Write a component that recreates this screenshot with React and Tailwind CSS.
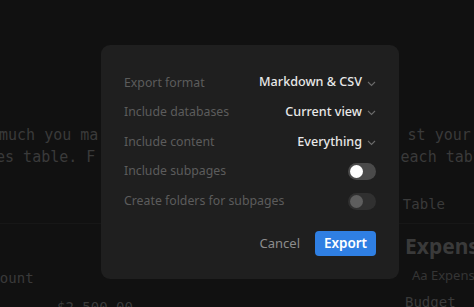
import React from "react";

const sans = { fontFamily: '"Noto Sans", "Open Sans", sans-serif' };

function Chevron() {
  return (
    <svg width="9" height="6" viewBox="0 0 9 6" className="ml-[5px] mt-[2px]">
      <polyline points="1,1 4.5,4.5 8,1" fill="none" stroke="#6b6b6b" strokeWidth="1.1" />
    </svg>
  );
}

function Row({ label, children }) {
  return (
    <div className="flex items-center justify-between h-[29.6px]">
      <span className="text-[12.3px] text-[#5c5c5c]">{label}</span>
      {children}
    </div>
  );
}

function Select({ value }) {
  return (
    <div className="flex items-center">
      <span className="text-[12.6px] font-medium text-[#e8e8e8]">{value}</span>
      <Chevron />
    </div>
  );
}

function Toggle({ disabled }) {
  return (
    <div
      className={`w-[28px] h-[17px] rounded-full flex items-center px-[2px] ${
        disabled ? "bg-[#303030]" : "bg-[#4a4a4a]"
      }`}
    >
      <div
        className={`w-[13px] h-[13px] rounded-full ${disabled ? "bg-[#5e5e5e]" : "bg-white"}`}
      />
    </div>
  );
}

export default function App() {
  return (
    <div
      className="relative w-[474px] h-[307px] overflow-hidden bg-[#111111]"
      style={{ fontFamily: '"DejaVu Sans Mono", monospace' }}
    >
      {/* background page */}
      <div className="flex flex-col h-full">
        <div className="h-[223px] shrink-0 flex flex-col pt-[124px]">
          <div className="flex justify-between text-[15px] leading-[22px] text-[#3a3a3a] whitespace-nowrap">
            <div className="flex flex-col -ml-[1px]">
              <span>much you ma</span>
              <span className="-ml-[12px]">ges table. F</span>
            </div>
            <div className="flex flex-col -mr-[60px]">
              <span className="ml-[5px]">st your budget</span>
              <span className="-ml-[2px]">each table</span>
            </div>
          </div>
          <div className="flex justify-end mt-[26px] pr-[29px] text-[14px] text-[#3a3a3a]">
            Table
          </div>
        </div>
        <div className="border-t border-[#171717] flex-1 min-h-0 flex justify-between whitespace-nowrap">
          <div className="flex flex-col pt-[44px] text-[14px] text-[#3a3a3a]">
            <span className="-ml-[17px]">Amount</span>
            <span className="ml-[57px] mt-[8px]">$2,500.00</span>
          </div>
          <div className="flex flex-col w-[69px] pt-[6px]">
            <span className="text-[21px] leading-[32px] font-bold text-[#3a3a3a]" style={sans}>
              Expenses
            </span>
            <span className="ml-[7px] mt-[4px] text-[13px] text-[#353535]" style={sans}>
              Aa Expense
            </span>
            <span className="mt-[6px] text-[14px] text-[#3a3a3a]">Budget</span>
          </div>
        </div>
      </div>

      {/* dialog overlay */}
      <div
        className="absolute left-[101px] top-[45px] w-[298px] h-[234px] rounded-[9px] bg-[#1f1f1f] px-[23px] pt-[23px] flex flex-col"
        style={sans}
      >
        <Row label="Export format">
          <Select value="Markdown & CSV" />
        </Row>
        <Row label="Include databases">
          <Select value="Current view" />
        </Row>
        <Row label="Include content">
          <Select value="Everything" />
        </Row>
        <Row label="Include subpages">
          <Toggle />
        </Row>
        <Row label="Create folders for subpages">
          <Toggle disabled />
        </Row>
        <div className="flex justify-end items-center gap-[15px] mt-[15px]">
          <span className="text-[13px] text-[#8c8c8c]">Cancel</span>
          <button className="w-[61px] h-[25px] rounded-[4px] bg-[#2f7fe3] text-white text-[13.5px] font-semibold">
            Export
          </button>
        </div>
      </div>
    </div>
  );
}
